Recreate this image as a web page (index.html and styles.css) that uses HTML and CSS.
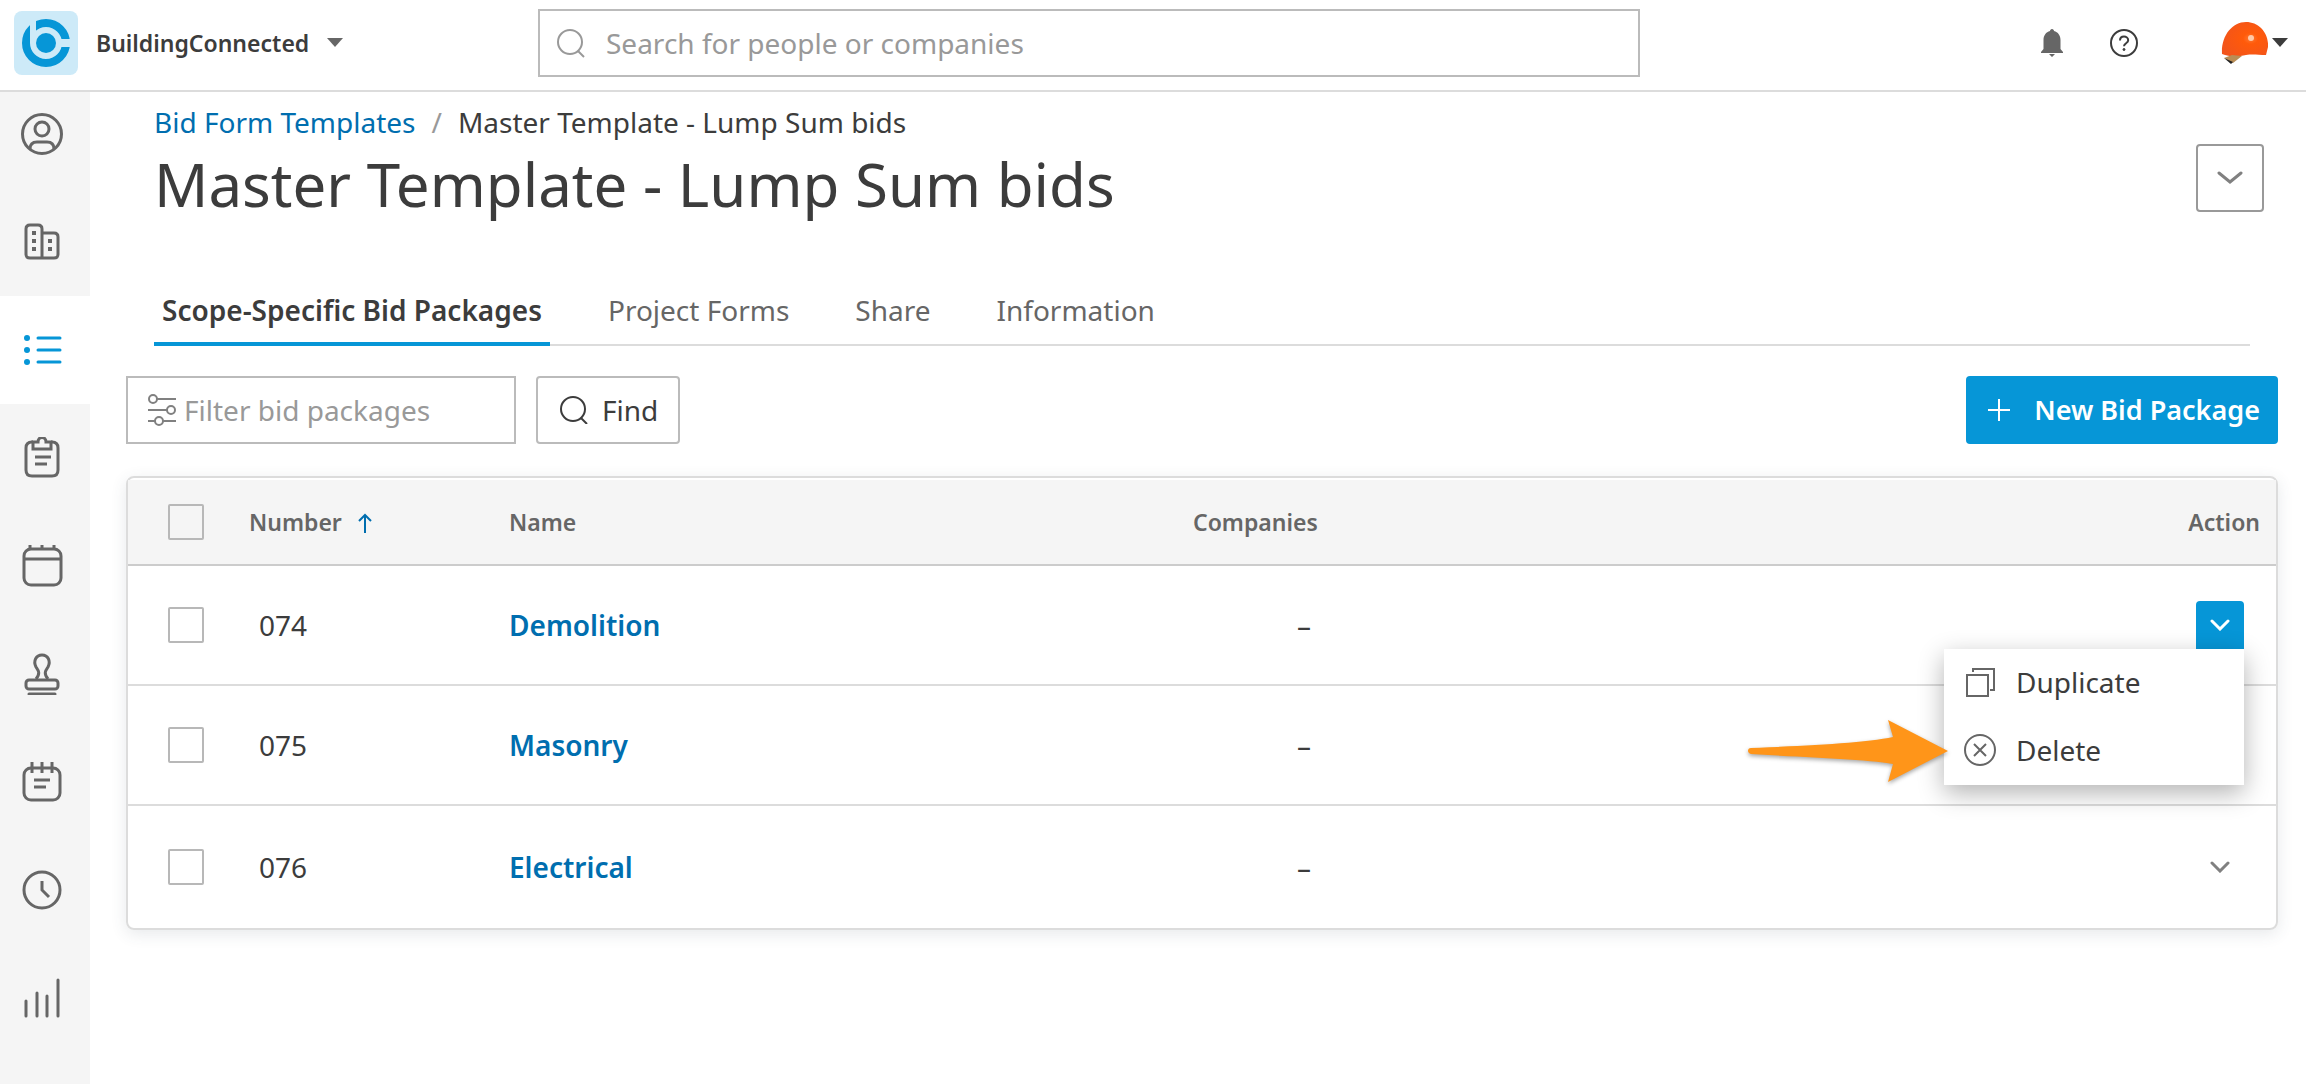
FILE: index.html
```html
<!DOCTYPE html>
<html lang="en">
<head>
    <meta charset="UTF-8">
    <meta name="viewport" content="width=device-width, initial-scale=1.0">
    <title>Master Template - Lump Sum bids</title>
    <link rel="stylesheet" href="styles.css">
</head>

<body>
    <header class="topbar">
        <button class="brand" type="button">
            <svg class="brand-logo" width="64" height="64" viewBox="0 0 64 64">
                <rect width="64" height="64" rx="8" fill="#cdeaf8"/>
                <circle cx="32" cy="32" r="20" fill="none" stroke="#0696d7" stroke-width="8"/>
                <path d="M16 0h6v32h-6zM46 28h18v8h-18z" fill="#cdeaf8"/>
                <circle cx="32" cy="32" r="10" fill="#0696d7"/>
            </svg>
            <span class="brand-name">BuildingConnected</span>
            <svg width="16" height="10" viewBox="0 0 16 10"><path d="M0 0h16L8 9z" fill="#666"/></svg>
        </button>

        <label class="search">
            <svg width="30" height="30" viewBox="0 0 30 30" fill="none" stroke="#999" stroke-width="2"><circle cx="14" cy="14" r="12"/><path d="M22 23l6 6"/></svg>
            <input type="text" placeholder="Search for people or companies" aria-label="Search for people or companies">
        </label>

        <div class="account">
            <button type="button" aria-label="Notifications">
                <svg width="24" height="28" viewBox="0 0 24 28" fill="#666"><path d="M12 0c1.200 0 2 1 2 2 4 1 6.500 4.500 6.500 9v9L23 23v1H1v-1l2.500-3v-9C3.500 6.500 6 3 10 2c0-1 .8-2 2-2zM9 25h6l-3 3z"/></svg>
            </button>
            <button type="button" aria-label="Help">
                <svg width="28" height="28" viewBox="0 0 28 28" fill="none" stroke="#3c3c3c" stroke-width="2"><circle cx="14" cy="14" r="13"/><path d="M10 11.500c0-2.800 2-4 4-4s4.200 1.400 4.200 3.700c0 3-4.200 3-4.200 6"/><circle cx="14" cy="20.500" r="1" fill="#3c3c3c" stroke-width="1"/></svg>
            </button>
            <button class="profile" type="button" aria-label="Profile">
                <svg width="48" height="48" viewBox="0 0 48 48">
                    <defs>
                        <radialGradient id="hat" cx="62%" cy="48%" r="65%">
                            <stop offset="0" stop-color="#ff7a35"/>
                            <stop offset=".25" stop-color="#ff5a0a"/>
                            <stop offset="1" stop-color="#f2541b"/>
                        </radialGradient>
                    </defs>
                    <path d="M2 35C1 17 12 3 26 3c13 0 23 11 22 25l-2 8c-8 0-13-1-20 0-8 2-17 2-24-1z" fill="url(#hat)"/>
                    <path d="M4 39l8-3 10 1-9 7z" fill="#b98d55"/>
                    <path d="M4 39l9 4-2 2z" fill="#222"/>
                    <circle cx="31" cy="19" r="3" fill="#ffc9a8"/>
                </svg>
                <svg width="16" height="10" viewBox="0 0 16 10"><path d="M0 0h16L8 9z" fill="#3c3c3c"/></svg>
            </button>
        </div>
    </header>

    <div class="layout">
        <nav class="sidebar">
            <a href="#" aria-label="Profile">
                <svg viewBox="0 0 42 42"><circle cx="21" cy="21" r="19.500"/><circle cx="21" cy="16" r="7"/><path d="M9 36c0-5 3-7 7-7h10c4 0 7 2 7 7"/></svg>
            </a>
            <a href="#" aria-label="Companies">
                <svg viewBox="0 0 42 42"><path d="M21 37V8c0-2-1-4-4-4H9C6 4 5 6 5 8v25c0 3 1 4 4 4h24c3 0 4-1 4-4V16c0-3-2-4-4-4H21"/><path d="M11 12h4M11 20h4M11 28h4M27 20h4M27 28h4" stroke-width="4"/></svg>
            </a>
            <a class="active" href="#" aria-label="Bid forms">
                <svg viewBox="0 0 42 42"><path d="M17 9h22M17 21h22M17 33h22" stroke-linecap="round"/><g fill="#0696d7" stroke="none"><circle cx="6" cy="9" r="3"/><circle cx="6" cy="21" r="3"/><circle cx="6" cy="33" r="3"/></g></svg>
            </a>
            <a href="#" aria-label="Tasks">
                <svg viewBox="0 0 42 42"><path d="M12 5h-1c-4 0-6 2-6 6v22c0 4 2 6 6 6h20c4 0 6-2 6-6V11c0-4-2-6-6-6h-1"/><path d="M12 5v7h18V5h-5c0-6-8-6-8 0zM14 20h16M14 27h12"/></svg>
            </a>
            <a href="#" aria-label="Calendar">
                <svg viewBox="0 0 42 42"><rect x="3" y="4" width="37" height="36" rx="7"/><path d="M3 14h37M9 0v4M21 0v4M33 0v4"/></svg>
            </a>
            <a href="#" aria-label="Qualification">
                <svg viewBox="0 0 42 42"><path d="M15 26c5-6 2-9 0-12-3-6 0-12 6-12s9 6 6 12c-2 3-5 6 0 12"/><rect x="5" y="27" width="32" height="9" rx="3"/><path d="M8 41h26" stroke-linecap="round"/></svg>
            </a>
            <a href="#" aria-label="Notes">
                <svg viewBox="0 0 42 42"><rect x="3" y="7" width="36" height="32" rx="7"/><path d="M11 1v11M21 1v11M31 1v11M13 19h16M13 26h12"/></svg>
            </a>
            <a href="#" aria-label="History">
                <svg viewBox="0 0 42 42"><circle cx="21" cy="21" r="18"/><path d="M21 12v9l7 7"/></svg>
            </a>
            <a href="#" aria-label="Reports">
                <svg viewBox="0 0 42 42"><path d="M5 24v15M16 16v23M26 19v20M37 3v36" stroke-linecap="round"/></svg>
            </a>
        </nav>

        <main class="content">
            <div class="page-head">
                <div>
                    <p class="breadcrumb"><a href="#">Bid Form Templates</a><span class="slash">/</span><span>Master Template - Lump Sum bids</span></p>
                    <h1>Master Template - Lump Sum bids</h1>
                </div>
                <button class="more" type="button" aria-label="More">
                    <svg width="26" height="14" viewBox="0 0 26 14"><path d="M2 2l11 9L24 2"/></svg>
                </button>
            </div>

            <nav class="tabs">
                <a class="selected" href="#">Scope-Specific Bid Packages</a>
                <a href="#">Project Forms</a>
                <a href="#">Share</a>
                <a href="#">Information</a>
            </nav>

            <div class="toolbar">
                <label class="filter">
                    <svg width="28" height="32" viewBox="0 0 28 32" fill="none" stroke="#808080" stroke-width="2"><path d="M9 5h19M0 16h19M0 27h7M15 27h13"/><circle cx="5" cy="5" r="4"/><circle cx="23" cy="16" r="4"/><circle cx="11" cy="27" r="4"/></svg>
                    <input type="text" placeholder="Filter bid packages" aria-label="Filter bid packages">
                </label>
                <button class="find" type="button">
                    <svg width="28" height="28" viewBox="0 0 28 28" fill="none" stroke="#3c3c3c" stroke-width="2"><circle cx="13" cy="13" r="12"/><path d="M21 22l6 6"/></svg>
                    Find
                </button>
                <button class="create" type="button">
                    <svg width="22" height="22" viewBox="0 0 22 22" stroke="#fff" stroke-width="2"><path d="M11 0v22M0 11h22"/></svg>
                    New Bid Package
                </button>
            </div>

            <div class="card">
                <table class="packages">
                    <thead>
                        <tr>
                            <th class="col-check"><input type="checkbox" aria-label="Select all"></th>
                            <th class="col-number">Number <svg width="14" height="20" viewBox="0 0 14 20" fill="none" stroke="#006eaf" stroke-width="2"><path d="M7 20V2M1 8l6-6 6 6"/></svg></th>
                            <th class="col-name">Name</th>
                            <th class="col-companies">Companies</th>
                            <th class="col-action">Action</th>
                        </tr>
                    </thead>
                    <tbody>
                        <tr>
                            <td class="col-check"><input type="checkbox" aria-label="Select Demolition"></td>
                            <td class="number">074</td>
                            <td><a href="#">Demolition</a></td>
                            <td class="companies">–</td>
                            <td class="col-action">
                                <div class="row-action">
                                    <button class="toggle open" type="button" aria-label="Actions for Demolition">
                                        <svg width="20" height="12" viewBox="0 0 20 12"><path d="M2 2l8 8 8-8"/></svg>
                                    </button>
                                    <div class="menu">
                                        <button type="button">
                                            <svg width="32" height="32" viewBox="0 0 32 32"><path d="M3 9h21v21H3zM9 6V3h21v21h-4"/></svg>
                                            Duplicate
                                        </button>
                                        <button type="button">
                                            <svg width="32" height="32" viewBox="0 0 32 32"><circle cx="16" cy="16" r="15"/><path d="M10 10l12 12M22 10L10 22"/></svg>
                                            Delete
                                        </button>
                                        <svg class="pointer" width="206" height="68" viewBox="0 0 206 68">
                                            <path d="M5 31C55 29 120 26 147 20L142 3l60 31-60 31 5-18C120 42 50 40 5 37c-4-1-4-6 0-6z" fill="#ff9519"/>
                                        </svg>
                                    </div>
                                </div>
                            </td>
                        </tr>
                        <tr>
                            <td class="col-check"><input type="checkbox" aria-label="Select Masonry"></td>
                            <td class="number">075</td>
                            <td><a href="#">Masonry</a></td>
                            <td class="companies">–</td>
                            <td class="col-action"></td>
                        </tr>
                        <tr>
                            <td class="col-check"><input type="checkbox" aria-label="Select Electrical"></td>
                            <td class="number">076</td>
                            <td><a href="#">Electrical</a></td>
                            <td class="companies">–</td>
                            <td class="col-action">
                                <div class="row-action">
                                    <button class="toggle" type="button" aria-label="Actions for Electrical">
                                        <svg width="20" height="12" viewBox="0 0 20 12"><path d="M2 2l8 8 8-8"/></svg>
                                    </button>
                                </div>
                            </td>
                        </tr>
                    </tbody>
                </table>
            </div>
        </main>
    </div>
</body>
</html>
```
FILE: styles.css
```css
* {
    box-sizing: border-box;
    margin: 0;
    padding: 0;
}

body {
    min-height: 100vh;
    display: flex;
    flex-direction: column;
    background: #fff;
    color: #3c3c3c;
    font-family: "Noto Sans", "Open Sans", sans-serif;
    font-size: 28px;
    line-height: 36px;
}

a {
    color: #006eaf;
    text-decoration: none;
}

button, input {
    font: inherit;
    color: inherit;
    background: none;
    border: none;
    outline: none;
}

button {
    display: flex;
    align-items: center;
    cursor: pointer;
}

svg {
    flex: none;
}

::placeholder {
    color: #999;
    opacity: 1;
}

/* top bar */
.topbar {
    position: relative;
    z-index: 1;
    display: grid;
    grid-template-columns: 524px minmax(0, 1102px) 1fr;
    align-items: center;
    padding: 0 18px 4px 14px;
    height: 92px;
    border-bottom: 2px solid #dcdcdc;
    background: #fff;
}

.brand {
    gap: 18px;
}

.brand-name {
    font-size: 23px;
    font-weight: 600;
}

.search, .filter {
    display: flex;
    align-items: center;
    height: 68px;
    border: 2px solid #bbb;
    cursor: text;
}

.search {
    gap: 20px;
    padding: 0 16px;
}

.search input, .filter input {
    flex: 1;
    min-width: 0;
}

.account {
    display: flex;
    justify-content: flex-end;
    align-items: center;
    gap: 46px;
}

.profile {
    gap: 4px;
    margin-left: 36px;
}

/* left navigation */
.layout {
    flex: 1;
    display: flex;
}

.sidebar {
    flex: none;
    width: 90px;
    margin-top: -12px;
    background: #f5f5f5;
}

.sidebar a {
    display: flex;
    align-items: center;
    height: 108px;
    padding-left: 21px;
}

.sidebar .active {
    background: #fff;
}

.sidebar svg {
    width: 42px;
    height: 42px;
    fill: none;
    stroke: #666;
    stroke-width: 3;
}

.sidebar .active svg {
    stroke: #0696d7;
}

.content {
    flex: 1;
    min-width: 0;
    padding: 12px 28px 40px 36px;
}

/* page heading */
.page-head {
    display: flex;
    justify-content: space-between;
    align-items: flex-end;
    padding: 0 14px 0 28px;
}

.slash {
    margin: 0 16px;
    color: #999;
}

h1 {
    font-size: 60px;
    font-weight: 400;
    line-height: 88px;
}

.more {
    justify-content: center;
    width: 68px;
    height: 68px;
    margin-bottom: 16px;
    border: 2px solid #999;
    border-radius: 4px;
}

.more path, .toggle path {
    fill: none;
    stroke: #808080;
    stroke-width: 3;
    stroke-linecap: round;
}

.tabs {
    display: flex;
    gap: 50px;
    margin: 64px 28px 0;
    border-bottom: 2px solid #dcdcdc;
}

.tabs a {
    margin-bottom: -2px;
    padding: 0 8px 14px;
    color: #666;
}

.tabs .selected {
    border-bottom: 4px solid #0696d7;
    color: #3c3c3c;
    font-weight: 600;
}

/* filter, find and create */
.toolbar {
    display: flex;
    gap: 20px;
    margin: 30px 0 32px;
}

.filter {
    gap: 8px;
    width: 390px;
    padding: 0 20px;
}

.find {
    gap: 14px;
    height: 68px;
    padding: 0 20px 0 22px;
    border: 2px solid #bbb;
    border-radius: 4px;
}

.create {
    gap: 24px;
    height: 68px;
    margin-left: auto;
    padding: 0 18px 0 22px;
    border-radius: 4px;
    background: #0696d7;
    color: #fff;
    font-size: 27px;
    font-weight: 600;
}

/* packages table */
.card {
    border: 2px solid #dcdcdc;
    border-radius: 8px;
    padding-top: 2px;
    box-shadow: 0 4px 16px rgba(60, 70, 90, .12);
}

.packages {
    width: 100%;
    table-layout: fixed;
    border-collapse: separate;
    border-spacing: 0;
    text-align: left;
}

.packages th {
    height: 86px;
    border-bottom: 2px solid #ccc;
    background: #f5f5f5;
    color: #666;
    font-size: 23px;
    font-weight: 600;
}

.packages th svg {
    margin-left: 10px;
    vertical-align: -2px;
}

.packages td {
    height: 120px;
    border-bottom: 2px solid #dcdcdc;
}

.packages tr:last-child td {
    height: 122px;
    border-bottom: none;
}

.packages td a {
    font-weight: 600;
}

.packages .col-check {
    width: 121px;
    padding-left: 40px;
}

.col-number {
    width: 260px;
}

.col-name {
    width: 684px;
}

.packages .number {
    padding-left: 10px;
}

.packages .companies {
    padding-left: 104px;
}

.packages th.col-action {
    width: 200px;
    padding-right: 16px;
    text-align: right;
}

.packages input {
    display: block;
    appearance: none;
    width: 36px;
    height: 36px;
    border: 2px solid #b8b8b8;
    border-radius: 2px;
}

.row-action {
    position: relative;
    display: flex;
    justify-content: flex-end;
    padding-right: 32px;
}

.toggle {
    justify-content: center;
    width: 48px;
    height: 48px;
    border-radius: 4px;
}

.toggle.open {
    border-radius: 4px 4px 0 0;
    background: #0696d7;
}

.toggle.open path {
    stroke: #fff;
}

.menu {
    position: absolute;
    top: 100%;
    right: 32px;
    z-index: 2;
    width: 300px;
    background: #fff;
    box-shadow: 0 8px 24px rgba(0, 0, 0, .3);
}

.menu button {
    gap: 20px;
    width: 100%;
    height: 68px;
    padding: 0 20px 2px;
}

.menu button svg {
    fill: none;
    stroke: #666;
    stroke-width: 2;
}

/* arrow that points at the Delete item */
.pointer {
    position: absolute;
    right: 292px;
    bottom: 0;
    filter: drop-shadow(0 2px 2px rgba(0, 0, 0, .35));
}
```
